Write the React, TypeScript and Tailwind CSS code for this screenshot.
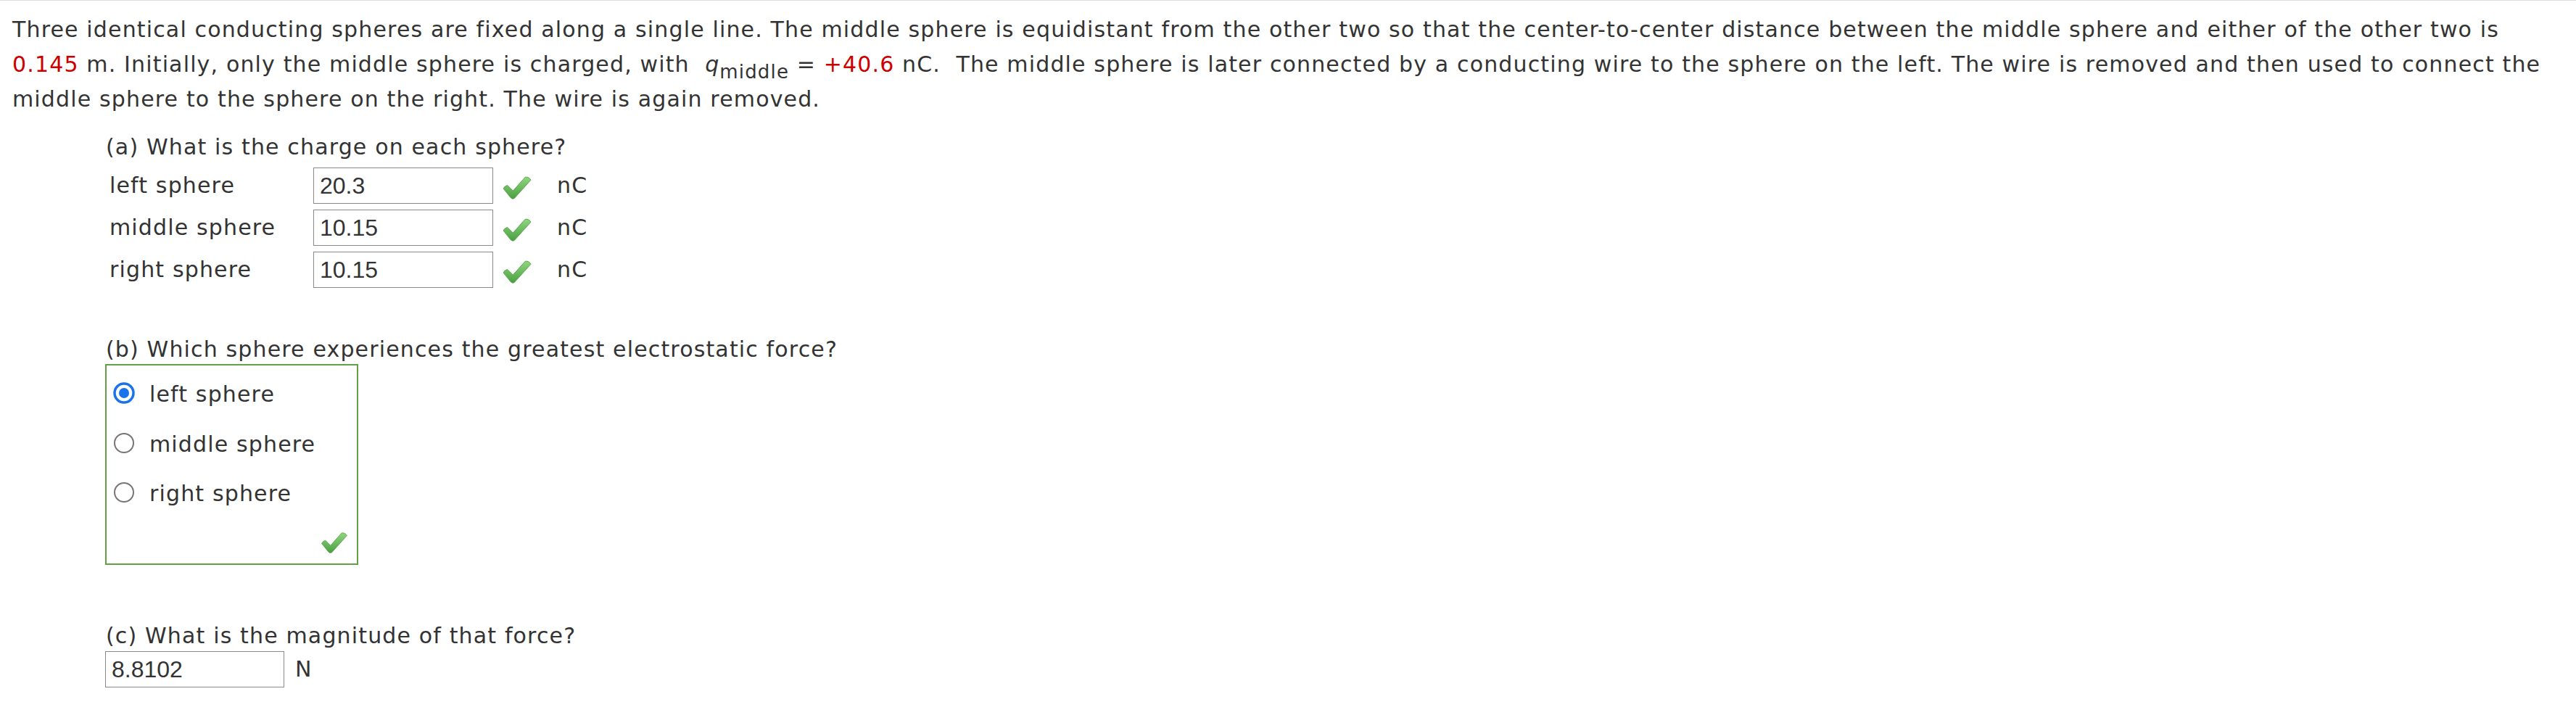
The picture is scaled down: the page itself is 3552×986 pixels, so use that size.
import React from "react";

function Check({ className = "" }: { className?: string }) {
  return (
    <svg viewBox="0 0 40 34" className={className}>
      <defs>
        <linearGradient id="ckg" x1="0" y1="0" x2="0" y2="1">
          <stop offset="0" stopColor="#8fd67e" />
          <stop offset="1" stopColor="#4a9f40" />
        </linearGradient>
      </defs>
      <path
        d="M2 18.5 Q3.5 15 7.5 14 L15 21.5 L31.5 3 Q36.5 2.5 39 7 L17 31.5 Q14.5 33.5 12 31 Z"
        fill="url(#ckg)"
        stroke="#4c9a41"
        strokeWidth="0.8"
        strokeLinejoin="round"
      />
    </svg>
  );
}

function Radio({ checked }: { checked: boolean }) {
  return (
    <svg viewBox="0 0 30 30" className="w-[30px] h-[30px] shrink-0">
      {checked ? (
        <>
          <circle cx="15" cy="15" r="13" fill="#fff" stroke="#1a73e8" strokeWidth="3.5" />
          <circle cx="15" cy="15" r="7" fill="#1a73e8" />
        </>
      ) : (
        <circle cx="15" cy="15" r="13" fill="#fff" stroke="#767676" strokeWidth="2" />
      )}
    </svg>
  );
}

function Field({ value, w = "w-[248px]" }: { value: string; w?: string }) {
  return (
    <div
      className={`${w} h-[50px] border border-[#8a8a8a] flex items-center pl-[8px] font-['Liberation_Sans',Arial,sans-serif] text-[32px] tracking-normal text-[#333] bg-white`}
    >
      {value}
    </div>
  );
}

export default function App() {
  const rows = [
    { label: "left sphere", value: "20.3" },
    { label: "middle sphere", value: "10.15" },
    { label: "right sphere", value: "10.15" },
  ];
  const radios = [
    { label: "left sphere", checked: true },
    { label: "middle sphere", checked: false },
    { label: "right sphere", checked: false },
  ];
  return (
    <div className="w-[3552px] min-h-[986px] bg-white border-t border-[#dddddd] font-['DejaVu_Sans',Verdana,sans-serif] text-[30px] tracking-[1.15px] text-[#333333]">
      <div className="pl-[17px] pt-[16px] leading-[48px] whitespace-nowrap">
        <div>
          Three identical conducting spheres are fixed along a single line. The middle sphere is equidistant from the other two so that the center-to-center distance between the middle sphere and either of the other two is
        </div>
        <div>
          <span className="text-[#cc0000]">0.145</span> m. Initially, only the middle sphere is charged, with{"\u00a0 "}
          <span className="italic">q</span>
          <sub className="text-[26px] relative top-[2px] align-sub leading-none">middle</sub> = <span className="text-[#cc0000]">+40.6</span> nC.{"\u00a0 "}The middle sphere is later connected by a conducting wire to the sphere on the left. The wire is removed and then used to connect the
        </div>
        <div>middle sphere to the sphere on the right. The wire is again removed.</div>
      </div>

      <div className="pl-[145px]">
        <div className="mt-[18px] leading-[48px] pl-[1px]">(a) What is the charge on each sphere?</div>
        <div className="flex flex-col">
          {rows.map((r) => (
            <div key={r.label} className="flex items-center h-[58px] leading-[48px]">
              <div className="w-[287px] pl-[6px]">{r.label}</div>
              <Field value={r.value} />
              <Check className="w-[41px] h-[35px] ml-[12px] mt-[4px]" />
              <div className="ml-[35px]">nC</div>
            </div>
          ))}
        </div>

        <div className="mt-[61px] leading-[40px] pl-[1px]">(b) Which sphere experiences the greatest electrostatic force?</div>
        <div className="w-[349px] h-[277px] border-2 border-[#62a046] flex flex-col pt-[4px]">
          {radios.map((r) => (
            <div key={r.label} className="flex items-center h-[68.5px] pl-[9px] leading-[48px]">
              <Radio checked={r.checked} />
              <div className="ml-[20px] relative top-[2px]">{r.label}</div>
            </div>
          ))}
          <div className="mt-auto mb-[13px] flex justify-end pr-[12px]">
            <Check className="w-[39px] h-[32px]" />
          </div>
        </div>

        <div className="mt-[78px] leading-[40px] pl-[1px]">(c) What is the magnitude of that force?</div>
        <div className="flex items-center mt-[1px] leading-[48px]">
          <Field value="8.8102" w="w-[247px]" />
          <div className="ml-[15px]">N</div>
        </div>
      </div>
    </div>
  );
}
